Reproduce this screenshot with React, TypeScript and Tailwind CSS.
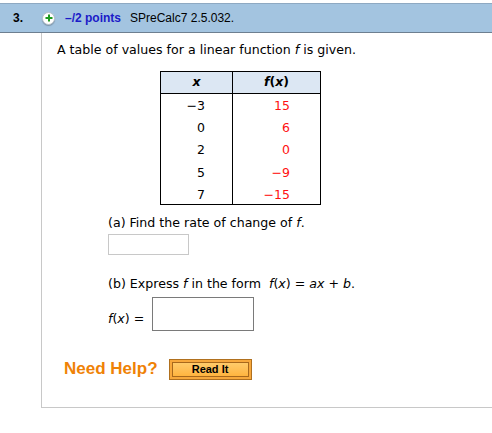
import React from "react";

const rows: [string, string][] = [
  ["\u22123", "15"],
  ["0", "6"],
  ["2", "0"],
  ["5", "\u22129"],
  ["7", "\u221215"],
];

function PlusIcon() {
  return (
    <span className="relative flex h-[13px] w-[13px] items-center justify-center rounded-full border border-[#b9c3cc] bg-white shadow-[0_1px_1px_rgba(0,0,0,0.25)]">
      <svg width="8" height="8" viewBox="0 0 8 8">
        <rect x="3" y="0.5" width="2" height="7" fill="#1f9a1f" />
        <rect x="0.5" y="3" width="7" height="2" fill="#1f9a1f" />
      </svg>
    </span>
  );
}

export default function App() {
  return (
    <div className="h-[433px] w-[492px] overflow-hidden bg-white font-['Liberation_Sans',Arial,sans-serif] text-black">
      {/* question header */}
      <div className="mt-[3px] flex h-[30px] items-center border-t border-b border-t-[#8ea9c2] border-b-[#6d7f90] bg-[#a3c4e0] text-[12px]">
        <span className="w-[42px] pl-[13px] font-bold">3.</span>
        <PlusIcon />
        <span className="ml-[10px] font-bold text-[#1b1bc8]">&ndash;/2 points</span>
        <span className="ml-[9px]">SPreCalc7 2.5.032.</span>
      </div>

      {/* question body */}
      <div className="ml-[41px] h-[375px] border-b border-l border-[#c8c8c8] pl-[15px] pt-[8px] font-['DejaVu_Sans',Verdana,sans-serif] text-[12.6px]">
        <p className="leading-[18px]">
          A table of values for a linear function <i>f</i> is given.
        </p>

        <table className="ml-[103px] mt-[12px] border-collapse border border-black text-[12.5px]">
          <thead>
            <tr className="bg-[#dce7f3]">
              <th className="h-[22px] w-[72px] border border-black text-center font-bold italic">x</th>
              <th className="h-[22px] w-[88px] border border-black text-center font-bold">
                <i>f</i>(<i>x</i>)
              </th>
            </tr>
          </thead>
          <tbody>
            {rows.map(([x, fx]) => (
              <tr key={x}>
                <td className="h-[22.3px] border-r border-black pr-[27px] pt-[3px] text-right">{x}</td>
                <td className="h-[22.3px] pr-[30px] pt-[3px] text-right text-[#ff1010]">{fx}</td>
              </tr>
            ))}
          </tbody>
        </table>

        <div className="ml-[51px] mt-[9px]">
          <p className="leading-[18px]">
            (a) Find the rate of change of <i>f</i>.
          </p>
          <div className="mt-[2px] h-[21px] w-[81px] border border-[#c8c8c8]" />

          <p className="mt-[20px] leading-[18px]">
            (b) Express <i>f</i> in the form&nbsp; <i>f</i>(<i>x</i>) = <i>ax</i> + <i>b</i>.
          </p>
          <div className="mt-[4px] flex items-end gap-[8px]">
            <span className="mb-[3px] leading-[18px]">
              <i>f</i>(<i>x</i>) =
            </span>
            <div className="h-[34px] w-[102px] border border-[#7a7a7a]" />
          </div>
        </div>

        <div className="ml-[7px] mt-[25px] flex items-center gap-[11px] font-['Liberation_Sans',Arial,sans-serif]">
          <span className="text-[17px] font-bold text-[#ef8206]">Need Help?</span>
          <button className="flex h-[21px] w-[83px] items-center justify-center border border-[#b0701e] bg-[#f7a83c] p-[2px]">
            <span className="flex h-full w-full items-center justify-center border border-[#a8681c] bg-gradient-to-b from-[#ffcb6a] to-[#ffb43e] text-[11px] font-bold leading-none">
              Read It
            </span>
          </button>
        </div>
      </div>
    </div>
  );
}
